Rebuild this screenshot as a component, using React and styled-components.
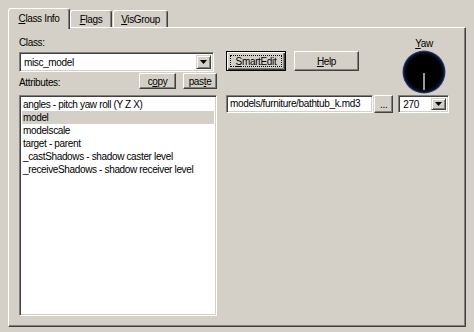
import React from 'react';
import styled, { createGlobalStyle } from 'styled-components';

const GlobalStyle = createGlobalStyle`
  html, body {
    margin: 0;
    padding: 0;
    background: #d4d0c8;
  }
  body {
    font-family: 'Liberation Sans', Arial, sans-serif;
    font-size: 10px;
    letter-spacing: -0.35px;
    color: #000;
  }
`;

const Page = styled.div`
  width: 474px;
  height: 332px;
  padding: 8px 0 0 8px;
  box-sizing: border-box;
`;

const TabRow = styled.div`
  display: flex;
  align-items: flex-end;
  height: 19px;
`;

const Tab = styled.div`
  position: relative;
  z-index: ${(p) => (p.active ? 2 : 1)};
  box-sizing: border-box;
  height: ${(p) => (p.active ? '21px' : '17px')};
  margin-bottom: ${(p) => (p.active ? '-2px' : '0')};
  margin-right: ${(p) => (p.active ? '0' : '1px')};
  width: ${(p) => p.w}px;
  padding-top: ${(p) => (p.active ? '4px' : '3px')};
  text-align: center;
  background: #d4d0c8;
  border-top: 1px solid #fff;
  border-left: 1px solid #fff;
  border-right: 1px solid #404040;
  border-radius: 3px 3px 0 0;
  box-shadow: inset -1px 0 #808080;
`;

const Panel = styled.div`
  position: relative;
  z-index: 1;
  box-sizing: border-box;
  width: 458px;
  height: 300px;
  border-top: 1px solid #fff;
  border-left: 1px solid #fff;
  border-right: 1px solid #404040;
  border-bottom: 1px solid #404040;
  box-shadow: inset -1px -1px #808080;
  padding: 8px 0 0 10px;
  display: flex;
`;

const LeftCol = styled.div`
  width: 198px;
  display: flex;
  flex-direction: column;
`;

const RightCol = styled.div`
  margin-left: 9px;
  width: 223px;
  display: flex;
  flex-direction: column;
`;

const Label = styled.div`
  line-height: 13px;
  height: 13px;
`;

const Sunken = styled.div`
  box-sizing: border-box;
  background: #fff;
  border: 1px solid;
  border-color: #808080 #fff #fff #808080;
  box-shadow: inset 1px 1px #404040, inset -1px -1px #d4d0c8;
`;

const Combo = styled(Sunken)`
  display: flex;
  align-items: center;
  width: ${(p) => p.w}px;
  height: ${(p) => p.h}px;
  padding: 2px 2px 2px 4px;
  margin-left: ${(p) => p.ml || 0}px;
  margin-top: ${(p) => p.mt || 0}px;
`;

const ComboText = styled.span`
  flex: 1;
`;

const ArrowButton = styled.div`
  box-sizing: border-box;
  width: 15px;
  height: 100%;
  background: #d4d0c8;
  border: 1px solid;
  border-color: #d4d0c8 #404040 #404040 #d4d0c8;
  box-shadow: inset 1px 1px #fff, inset -1px -1px #808080;
  display: flex;
  align-items: center;
  justify-content: center;
`;

const Button = styled.div`
  box-sizing: border-box;
  width: ${(p) => p.w}px;
  height: ${(p) => p.h}px;
  background: #d4d0c8;
  border: 1px solid;
  border-color: ${(p) => (p.isDefault ? '#000' : '#fff #404040 #404040 #fff')};
  box-shadow: ${(p) =>
    p.isDefault
      ? 'inset 1px 1px #fff, inset -1px -1px #404040, inset -2px -2px #808080'
      : 'inset -1px -1px #808080'};
  display: flex;
  align-items: center;
  justify-content: center;
  margin-left: ${(p) => p.ml || 0}px;
`;

const FocusRing = styled.span`
  display: flex;
  align-items: center;
  justify-content: center;
  box-sizing: border-box;
  width: calc(100% - 6px);
  height: calc(100% - 6px);
  border: 1px dotted #000;
`;

const AttrRow = styled.div`
  display: flex;
  align-items: flex-end;
  height: 16px;
  margin-top: 1px;
`;

const AttrLabel = styled(Label)`
  flex: 1;
`;

const ListBox = styled(Sunken)`
  margin-top: 6px;
  width: 198px;
  height: 221px;
  padding: 2px;
`;

const ListItem = styled.div`
  height: 13px;
  line-height: 13px;
  padding-left: 1px;
  white-space: nowrap;
  background: ${(p) => (p.selected ? '#d4d0c8' : 'transparent')};
`;

const TopRow = styled.div`
  display: flex;
  height: 59px;
`;

const Buttons = styled.div`
  display: flex;
  margin-top: 15px;
  flex: 1;
`;

const YawBox = styled.div`
  width: 46px;
  margin-right: 2px;
  display: flex;
  flex-direction: column;
  align-items: center;
`;

const YawLabel = styled(Label)`
  margin-top: 1px;
`;

const FieldRow = styled.div`
  display: flex;
  align-items: center;
`;

const Edit = styled(Sunken)`
  width: 148px;
  height: 18px;
  padding: 1px 3px;
  line-height: 14px;
  white-space: nowrap;
`;

const U = styled.u`
  text-decoration: underline;
`;

function Arrow() {
  return (
    <svg width="7" height="4" viewBox="0 0 7 4">
      <path d="M0 0h7L3.5 4z" fill="#000" />
    </svg>
  );
}

function Dial() {
  return (
    <svg width="44" height="44" viewBox="0 0 44 44">
      <defs>
        <radialGradient id="rim" cx="50%" cy="50%" r="50%">
          <stop offset="0.78" stopColor="#000" />
          <stop offset="0.92" stopColor="#0c1430" />
          <stop offset="1" stopColor="#3a4a80" />
        </radialGradient>
      </defs>
      <circle cx="22" cy="22" r="21.5" fill="url(#rim)" />
      <line x1="22" y1="23" x2="22" y2="40" stroke="#fff" strokeWidth="1.2" />
    </svg>
  );
}

const attributes = [
  'angles - pitch yaw roll (Y Z X)',
  'model',
  'modelscale',
  'target - parent',
  '_castShadows - shadow caster level',
  '_receiveShadows - shadow receiver level',
];

export default function App() {
  return (
    <Page>
      <GlobalStyle />
      <TabRow>
        <Tab active w={62}>
          <U>C</U>lass Info
        </Tab>
        <Tab w={42}>
          <U>F</U>lags
        </Tab>
        <Tab w={55}>
          <U>V</U>isGroup
        </Tab>
      </TabRow>
      <Panel>
        <LeftCol>
          <Label>Class:</Label>
          <Combo w={195} h={20} mt={3}>
            <ComboText>misc_model</ComboText>
            <ArrowButton>
              <Arrow />
            </ArrowButton>
          </Combo>
          <AttrRow>
            <AttrLabel>Attributes:</AttrLabel>
            <Button w={37} h={16}>
              c<U>o</U>py
            </Button>
            <Button w={34} h={16} ml={7}>
              pas<U>t</U>e
            </Button>
          </AttrRow>
          <ListBox>
            {attributes.map((a) => (
              <ListItem key={a} selected={a === 'model'}>
                {a}
              </ListItem>
            ))}
          </ListBox>
        </LeftCol>
        <RightCol>
          <TopRow>
            <Buttons>
              <Button w={60} h={20} isDefault>
                <FocusRing>
                  <U>S</U>martEdit
                </FocusRing>
              </Button>
              <Button w={65} h={20} ml={8}>
                <U>H</U>elp
              </Button>
            </Buttons>
            <YawBox>
              <YawLabel>
                <U>Y</U>aw
              </YawLabel>
              <Dial />
            </YawBox>
          </TopRow>
          <FieldRow>
            <Edit>models/furniture/bathtub_k.md3</Edit>
            <Button w={19} h={18} ml={1}>
              ...
            </Button>
            <Combo w={51} h={18} ml={5}>
              <ComboText>270</ComboText>
              <ArrowButton>
                <Arrow />
              </ArrowButton>
            </Combo>
          </FieldRow>
        </RightCol>
      </Panel>
    </Page>
  );
}
